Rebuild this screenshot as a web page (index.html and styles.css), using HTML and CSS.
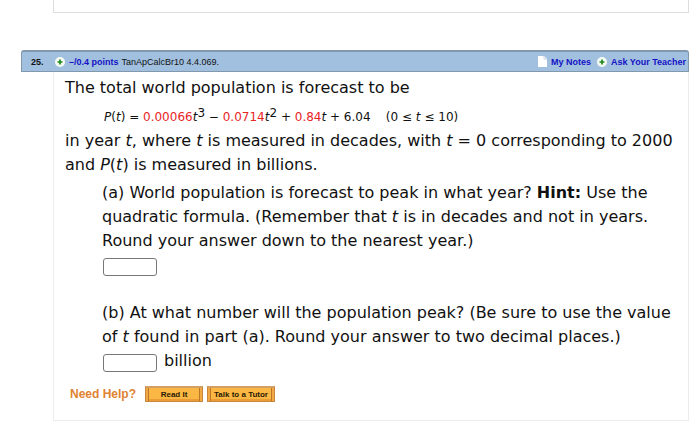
FILE: index.html
```html
<!DOCTYPE html>
<html lang="en">
<head>
  <meta charset="UTF-8" />
  <meta name="viewport" content="width=device-width, initial-scale=1" />
  <title>Question 25</title>
  <link rel="stylesheet" href="styles.css">
</head>
<body>
  <!-- End of the previous question -->
  <div class="box previous"></div>

  <div class="question">
    <div class="header">
      <span class="number">25.</span>
      <svg class="plus" viewBox="0 0 10 10"><circle cx="5" cy="5" r="5" fill="#f6faf4"/><path d="M5 2.5v5M2.5 5h5" stroke="#1c8a1c" stroke-width="1.7"/></svg>
      <a class="points" href="#">–/0.4 points</a>
      <span class="source">TanApCalcBr10 4.4.069.</span>
      <a class="notes" href="#"><svg class="page" viewBox="0 0 9 11"><path d="M0 0h6l3 3v8H0z" fill="#fff"/><path d="M6 0v3h3" fill="none" stroke="#c8d4e0"/></svg>My Notes</a>
      <a class="teacher" href="#"><svg class="plus" viewBox="0 0 10 10"><circle cx="5" cy="5" r="5" fill="#f6faf4"/><path d="M5 2.5v5M2.5 5h5" stroke="#1c8a1c" stroke-width="1.7"/></svg>Ask Your Teacher</a>
    </div>

    <div class="box content">
      <p>The total world population is forecast to be</p>
      <p class="formula"><i>P</i>(<i>t</i>) = <span class="red">0.00066</span><i>t</i><sup>3</sup> − <span class="red">0.0714</span><i>t</i><sup>2</sup> + <span class="red">0.84</span><i>t</i> + 6.04 &nbsp;&nbsp; (0 ≤ <i>t</i> ≤ 10)</p>
      <p>in year <i>t</i>, where <i>t</i> is measured in decades, with <i>t</i> = 0 corresponding to 2000 and <i>P</i>(<i>t</i>) is measured in billions.</p>

      <div class="part">
        <label for="partA">(a) World population is forecast to peak in what year? <b>Hint:</b> Use the quadratic formula. (Remember that <i>t</i> is in decades and not in years. Round your answer down to the nearest year.)</label>
        <div class="answer"><input type="text" id="partA" /></div>
      </div>

      <div class="part">
        <label for="partB">(b) At what number will the population peak? (Be sure to use the value of <i>t</i> found in part (a). Round your answer to two decimal places.)</label>
        <div class="answer"><input type="text" id="partB" /> <span>billion</span></div>
      </div>

      <div class="help">
        <span class="help-title">Need Help?</span>
        <button type="button" class="read">Read It</button>
        <button type="button" class="tutor">Talk to a Tutor</button>
      </div>
    </div>
  </div>
</body>
</html>
```

FILE: styles.css
```css
* {
  box-sizing: border-box;
}

body {
  margin: 0;
  padding: 0 11px 0 21px;
  background: #fff;
  color: #111;
  font-family: Verdana, "DejaVu Sans", sans-serif;
  font-size: 16px;
  line-height: 24px;
}

p {
  margin: 0;
}

/* White panels under the header bars */
.box {
  margin-left: 32px;
  border: 1px solid #ececec;
  border-top: none;
}

.previous {
  height: 13px;
  margin-bottom: 37px;
  border-color: #ddd;
}

/* Blue question bar */
.header {
  display: flex;
  align-items: center;
  height: 22px;
  padding: 0 2px 0 9px;
  background: #a1c0e0;
  border: 1px solid #8299ad;
  border-top-width: 2px;
  border-radius: 3px 3px 0 0;
  font-family: Arial, "Liberation Sans", sans-serif;
  font-size: 9px;
  line-height: 12px;
}

.header a {
  display: flex;
  align-items: center;
  color: #1512c4;
  font-weight: bold;
  text-decoration: none;
}

.number {
  width: 24px;
  font-weight: bold;
}

.plus {
  width: 10px;
  height: 10px;
}

.page {
  width: 9px;
  height: 11px;
  margin-right: 4px;
}

.points {
  margin: 0 3px 0 4px;
}

.notes {
  margin-left: auto;
}

.teacher {
  margin-left: 6px;
}

.teacher .plus {
  margin-right: 4px;
}

/* Question text */
.content {
  padding: 4px 8px 14px 11px;
}

.formula {
  padding: 5px 0 0 39px;
  font-size: 12px;
}

.formula sup {
  font-size: 12px;
  line-height: 0;
  vertical-align: 4px;
}

.red {
  color: #e8251f;
}

.part {
  margin: 4px 0 0 37px;
}

.part + .part {
  margin-top: 24px;
}

.part label {
  display: block;
}

.answer {
  display: flex;
  align-items: center;
  gap: 7px;
  height: 24px;
}

.answer input {
  width: 54px;
  height: 18px;
  margin: 4px 0 0 1px;
  border: 1px solid #777;
  border-radius: 3px;
  background: #fff;
}

/* Help row */
.help {
  display: flex;
  align-items: center;
  margin-top: 9px;
  padding-left: 5px;
  font-family: Arial, "Liberation Sans", sans-serif;
}

.help-title {
  margin-right: 9px;
  color: #e08332;
  font-size: 12px;
  font-weight: bold;
}

.help button {
  height: 16px;
  margin-right: 4px;
  padding: 0;
  background: #fbb743;
  border: 1px solid #c9873d;
  border-top: 2px solid #d3a063;
  box-shadow: inset 2px 0 #f2a844, inset -2px 0 #f2a844, inset 3px 0 #b87628, inset -3px 0 #b87628, inset 0 -2px #ec9c34;
  color: #2a1a04;
  font-family: Arial, "Liberation Sans", sans-serif;
  font-size: 8px;
  font-weight: bold;
  line-height: 10px;
}

.read {
  width: 58px;
}

.tutor {
  width: 68px;
}
```
